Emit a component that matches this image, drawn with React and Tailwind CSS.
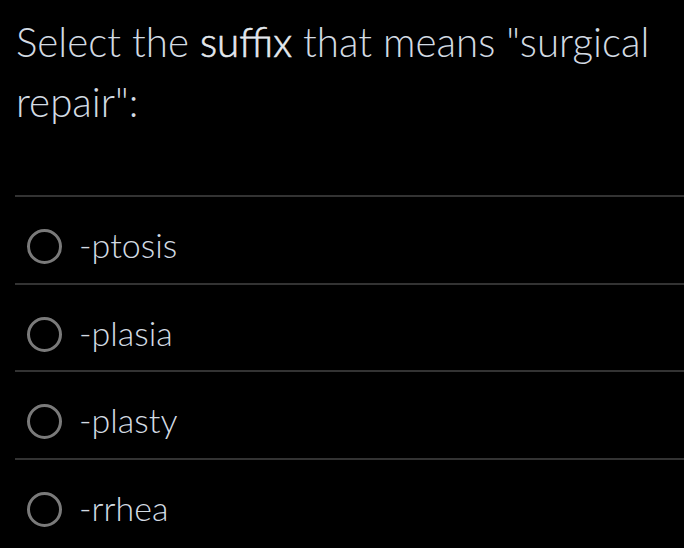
export default function App() {
  const options = ["-ptosis", "-plasia", "-plasty", "-rrhea"];
  return (
    <div className="w-[684px] h-[548px] bg-black overflow-hidden [font-family:Lato,'Noto_Sans',sans-serif] font-light">
      <div className="pl-[16px] pt-[12px] pr-[8px]">
        <h1 className="text-[40.3px] leading-[60px] font-light text-[#d3dbe3]">
          Select the <span className="text-[#e4e9ee] [-webkit-text-stroke:0.6px_#e4e9ee]">suffix</span> that means "surgical repair":
        </h1>
      </div>
      <div className="ml-[15px] mt-[63px]">
        {options.map((o) => (
          <div key={o} className="h-[87.5px] border-t-2 border-[#333333]">
            <div className="flex items-center pl-[12px] pt-[31px] gap-[17px]">
              <div className="w-[35px] h-[35px] rounded-full border-[3px] border-[#7a7a7a] shrink-0" />
              <span className="text-[34px] leading-[40px] -mt-[3px] font-light text-[#d3dbe3]">{o}</span>
            </div>
          </div>
        ))}
      </div>
    </div>
  );
}
